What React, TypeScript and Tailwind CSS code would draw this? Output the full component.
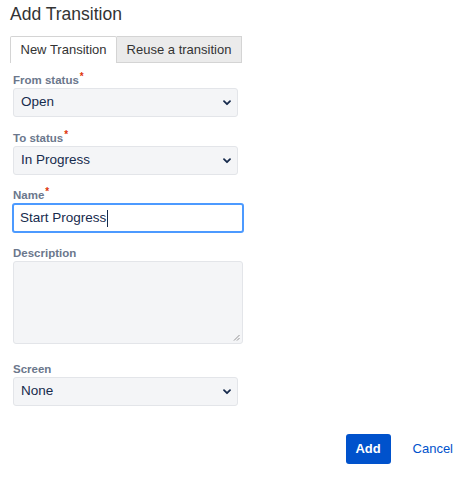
import React from "react";

function Chevron() {
  return (
    <svg width="8" height="6" viewBox="0 0 8 6" className="shrink-0">
      <path d="M1 1.2 L4 4.2 L7 1.2" fill="none" stroke="#172b4d" strokeWidth="1.8" strokeLinecap="round" strokeLinejoin="round" />
    </svg>
  );
}

function Label({ text, required }: { text: string; required?: boolean }) {
  return (
    <div className="h-4 text-[11.5px] leading-4 font-bold text-[#6b778c] pl-[3px] whitespace-nowrap">
      {text}
      {required && <span className="text-[#de350b] text-[10px] align-top relative -top-[3px] ml-[1px]">*</span>}
    </div>
  );
}

function Select({ value }: { value: string }) {
  return (
    <div className="ml-[3px] w-[225px] h-[29px] flex items-center justify-between pl-[7px] pr-[6px] bg-[#f4f5f7] border border-[#e3e5e9] rounded-[3px] text-[13.5px] text-[#172b4d]">
      <span>{value}</span>
      <Chevron />
    </div>
  );
}

export default function App() {
  return (
    <div className="w-[474px] h-[477px] bg-white pl-[10px] pr-[10px] pt-[2px] font-['Liberation_Sans',Arial,sans-serif] text-[#172b4d]">
      <div className="text-[17.5px] leading-6 text-[#333]">Add Transition</div>
      <div className="flex mt-[10px] h-[27px] text-[13px] text-[#333]">
        <div className="w-[107px] border border-b-0 border-[#d4d4d4] bg-white flex items-center justify-center rounded-t-[2px] whitespace-nowrap">New Transition</div>
        <div className="w-[125px] border border-l-0 border-[#d4d4d4] bg-[#ebebeb] flex items-center justify-center whitespace-nowrap">Reuse a transition</div>
      </div>
      <div className="mt-[9px] flex flex-col">
        <Label text="From status" required />
        <Select value="Open" />
      </div>
      <div className="mt-[13px] flex flex-col">
        <Label text="To status" required />
        <Select value="In Progress" />
      </div>
      <div className="mt-[12px] flex flex-col">
        <Label text="Name" required />
        <div className="ml-[2px] w-[232px] h-[30px] flex items-center pl-[6px] bg-white border-2 border-[#4c9aff] rounded-[3px] text-[13.5px] text-[#172b4d]">
          <span>Start Progress</span>
          <span className="w-px h-[17px] bg-[#172b4d] ml-[1px]" />
        </div>
      </div>
      <div className="mt-[12px] flex flex-col">
        <Label text="Description" />
        <div className="ml-[3px] w-[230px] h-[83px] relative bg-[#f4f5f7] border border-[#e3e5e9] rounded-[3px]">
          <svg className="absolute right-[2px] bottom-[2px]" width="7" height="7" viewBox="0 0 7 7">
            <path d="M6.5 1 L1 6.5 M6.5 4 L4 6.5" stroke="#888" strokeWidth="0.9" />
          </svg>
        </div>
      </div>
      <div className="mt-[17px] flex flex-col">
        <Label text="Screen" />
        <Select value="None" />
      </div>
      <div className="mt-[28px] flex justify-end items-center pr-[1px]">
        <button className="h-[30px] w-[45px] bg-[#0052cc] text-white font-bold text-[13px] rounded-[3px]">Add</button>
        <button className="h-[30px] ml-[12px] px-[10px] text-[#0052cc] text-[13px]">Cancel</button>
      </div>
    </div>
  );
}
